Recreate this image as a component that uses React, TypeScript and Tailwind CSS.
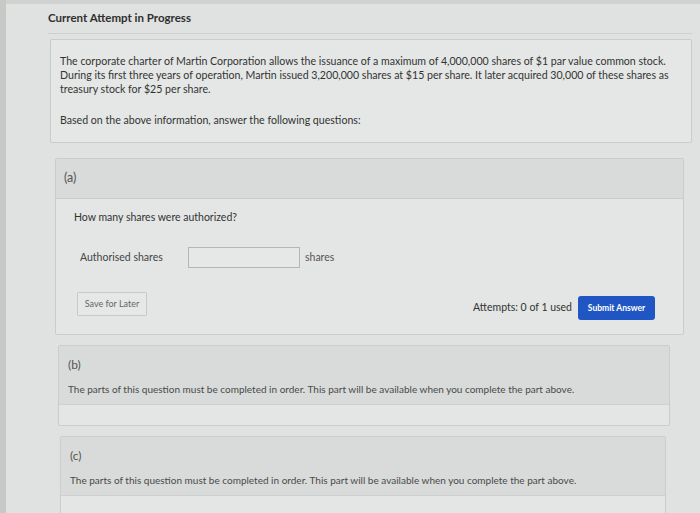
import React from "react";

const PartLocked = ({ label, className }: { label: string; className: string }) => (
  <div className={"border border-[#cbcdcb] rounded-[2px] bg-[#e3e6e4] " + className}>
    <div className="bg-[#d8dbd9] border-b border-[#cdd0ce] pl-[9px] pt-[11px] pb-[8px]">
      <div className="text-[12px] text-[#555] leading-[16px]">{label}</div>
      <div className="mt-[10px] text-[10px] text-[#4a4a4a] leading-[13px] whitespace-nowrap">
        The parts of this question must be completed in order. This part will be available when you complete the part above.
      </div>
    </div>
    <div className="h-[20px]" />
  </div>
);

export default function App() {
  return (
    <div
      className="w-[700px] h-[513px] overflow-hidden flex bg-[#dfe2e0] text-[#333]"
      style={{ fontFamily: "Lato, 'Open Sans', sans-serif" }}
    >
      <div className="w-[6px] bg-[#c7c9c7]" />
      <div className="flex-1 flex flex-col border-t-[4px] border-[#d0d2d0]">
        <div className="pl-[42px] pr-[8px]">
          <div className="mt-[6px] text-[11.5px] font-bold text-[#2f2f2f] leading-[16px]">
            Current Attempt in Progress
          </div>
          <div className="mt-[7px] h-px bg-[#cdd0ce]" />

          <div className="mt-[5px] ml-[2px] mr-[0px] h-[104px] border border-[#c9ccca] rounded-[2px] bg-[#e4e7e5] pl-[9px] pt-[14px] text-[10.6px] leading-[14px] text-[#333]">
            <p className="whitespace-nowrap">
              The corporate charter of Martin Corporation allows the issuance of a maximum of 4,000,000 shares of $1 par value common stock.
              <br />
              During its first three years of operation, Martin issued 3,200,000 shares at $15 per share. It later acquired 30,000 of these shares as
              <br />
              treasury stock for $25 per share.
            </p>
            <p className="mt-[17px]">Based on the above information, answer the following questions:</p>
          </div>

          <div className="mt-[15px] ml-[7px] mr-[8px] h-[177px] border border-[#c9ccca] rounded-[2px] bg-[#e3e6e4] flex flex-col">
            <div className="h-[40px] bg-[#d8dbd9] border-b border-[#c9ccca] pl-[8px] flex items-center">
              <span className="text-[12.5px] text-[#555]">(a)</span>
            </div>
            <div className="pl-[18px] pt-[11px] text-[10.5px] text-[#333] leading-[14px]">
              How many shares were authorized?
            </div>
            <div className="mt-[23px] pl-[24px] flex items-center text-[10.5px] text-[#444]">
              <span className="w-[108px]">Authorised shares</span>
              <div className="w-[112px] h-[21px] border border-[#b4b7b5] bg-[#e5e8e6]" />
              <span className="ml-[5px] text-[#555]">shares</span>
            </div>
            <div className="mt-[25px] pl-[21px] pr-[28px] flex items-center">
              <button className="w-[70px] h-[24px] -mt-[6px] border border-[#c6c9c7] bg-[#e5e8e6] text-[9px] text-[#666] rounded-[1px]">
                Save for Later
              </button>
              <div className="flex-1" />
              <span className="text-[10.5px] text-[#333] mr-[6px] mt-[3px]">Attempts: 0 of 1 used</span>
              <button className="w-[77px] h-[24px] mt-[3px] bg-[#1f56c3] rounded-[3px] text-white text-[8.5px] font-bold">
                Submit Answer
              </button>
            </div>
          </div>

          <PartLocked label="(b)" className="mt-[10px] ml-[10px] mr-[22px] h-[81px]" />
          <PartLocked label="(c)" className="mt-[10px] ml-[12px] mr-[26px] h-[90px]" />
        </div>
      </div>
    </div>
  );
}
